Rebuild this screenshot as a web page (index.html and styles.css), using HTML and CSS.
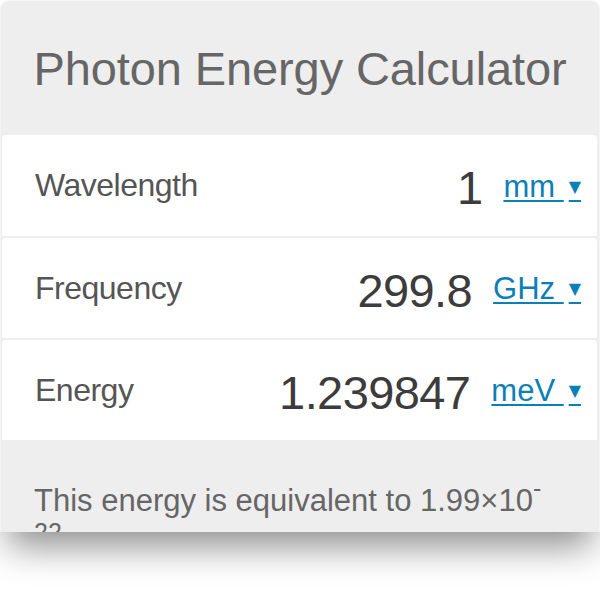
FILE: index.html
```html
<!DOCTYPE html>
<html lang="en">
<head>
<meta charset="utf-8">
<title>Photon Energy Calculator</title>
<link rel="stylesheet" href="styles.css">
</head>
<body>
<div class="card">
  <header class="head">
    <h1 class="title">Photon Energy Calculator</h1>
  </header>
  <div class="rows">
    <div class="row">
      <span class="label">Wavelength</span>
      <span class="value">1</span>
      <a class="unit" href="#">mm <span class="caret">▼</span></a>
    </div>
    <div class="row">
      <span class="label">Frequency</span>
      <span class="value">299.8</span>
      <a class="unit" href="#">GHz <span class="caret">▼</span></a>
    </div>
    <div class="row">
      <span class="label">Energy</span>
      <span class="value">1.239847</span>
      <a class="unit" href="#">meV <span class="caret">▼</span></a>
    </div>
  </div>
  <p class="note">This energy is equivalent to 1.99×10<sup>-&#8203;22</sup> J</p>
</div>
</body>
</html>
```
FILE: styles.css
```css
html, body {
  margin: 0;
  padding: 0;
  background: #ffffff;
}
body {
  font-family: "Liberation Sans", Arial, sans-serif;
  min-height: 600px;
}
.card {
  position: relative;
  width: 600px;
  height: 532px;
  box-sizing: border-box;
  overflow: hidden;
  background: #eeeeee;
  border: 1px solid #f4f4f4;
  border-bottom: none;
  border-radius: 10px 10px 0 0;
  box-shadow: 0 22px 36px -8px rgba(0, 0, 0, 0.45);
}
.head {
  height: 134px;
  display: flex;
  align-items: center;
  justify-content: center;
}
.title {
  margin: 0;
  font-weight: normal;
  font-size: 47px;
  color: #666666;
  letter-spacing: -0.1px;
}
.rows {
  display: flex;
  flex-direction: column;
  gap: 2px;
  margin: 0 2px 0 1px;
}
.row {
  height: 100px;
  background: #ffffff;
  border-radius: 4px 4px 0 0;
  display: flex;
  align-items: center;
  padding: 0 16px 0 33px;
}
.row:first-child {
  height: 101px;
}
.label {
  flex: 1;
  font-size: 32px;
  letter-spacing: -0.5px;
  color: #555555;
}
.value {
  font-size: 47px;
  letter-spacing: -0.6px;
  color: #3c3c3c;
  margin-right: 21px;
  padding-top: 4px;
}
.unit {
  font-size: 31px;
  color: #0b80b7;
  text-decoration: underline;
  text-decoration-thickness: 2px;
  text-underline-offset: 3px;
  padding-top: 2px;
}
.caret {
  font-family: "DejaVu Sans", sans-serif;
  font-size: 16px;
  margin-left: 5px;
  vertical-align: 5px;
}
.note {
  margin: 0;
  padding: 39px 33px 0 33px;
  font-size: 31px;
  line-height: 44px;
  color: #666666;
}
.note sup {
  font-size: 25px;
  line-height: 0;
  vertical-align: 14px;
}
```
